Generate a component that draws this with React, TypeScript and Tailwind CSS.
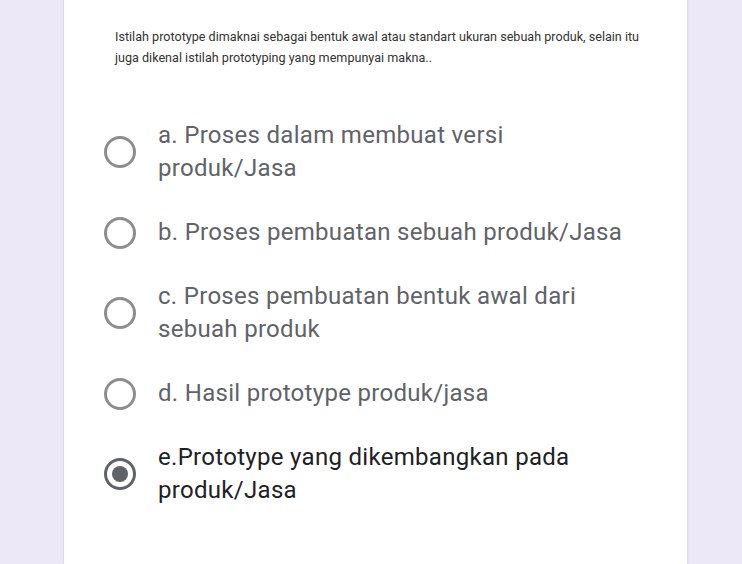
import React from "react";

// ── Data ──

const QUESTION =
  "Istilah prototype dimaknai sebagai bentuk awal atau standart ukuran sebuah produk, selain itu juga dikenal istilah prototyping yang mempunyai makna..";

const OPTIONS = [
  "a. Proses dalam membuat versi produk/Jasa",
  "b. Proses pembuatan sebuah produk/Jasa",
  "c. Proses pembuatan bentuk awal dari sebuah produk",
  "d. Hasil prototype produk/jasa",
  "e.Prototype yang dikembangkan pada produk/Jasa",
];

const SELECTED = 4;

// ── Radio ──

function Radio({ checked }: { checked: boolean }) {
  return (
    <div
      className={
        checked
          ? "flex h-[32px] w-[32px] shrink-0 items-center justify-center rounded-full border-[3px] border-[#5f6368]"
          : "flex h-[32px] w-[32px] shrink-0 items-center justify-center rounded-full border-[3px] border-[#8e8e8e]"
      }
    >
      {checked ? <div className="h-[16px] w-[16px] rounded-full bg-[#5f6368]" /> : null}
    </div>
  );
}

export default function App() {
  return (
    <div className="flex h-[564px] w-full justify-center overflow-hidden bg-[#ece8f8] font-['Roboto',sans-serif]">
      <div className="ml-[9px] h-full w-[623px] bg-white shadow-[0_0_2px_rgba(0,0,0,0.18)]">
        <p className="pl-[51px] pr-[40px] pt-[26px] text-[12.6px] leading-[21px] text-[#333]">
          {QUESTION}
        </p>

        <div className="mt-[51px] flex flex-col gap-[31px] pl-[40px] pr-[30px]">
          {OPTIONS.map((label, i) => (
            <label key={i} className="flex items-center gap-[22px]">
              <Radio checked={i === SELECTED} />
              <span
                className={
                  i === SELECTED
                    ? "max-w-[475px] text-[24px] leading-[33px] tracking-[0.3px] text-[#202124]"
                    : "max-w-[475px] text-[24px] leading-[33px] tracking-[0.3px] text-[#5f6368]"
                }
              >
                {label}
              </span>
            </label>
          ))}
        </div>
      </div>
    </div>
  );
}
